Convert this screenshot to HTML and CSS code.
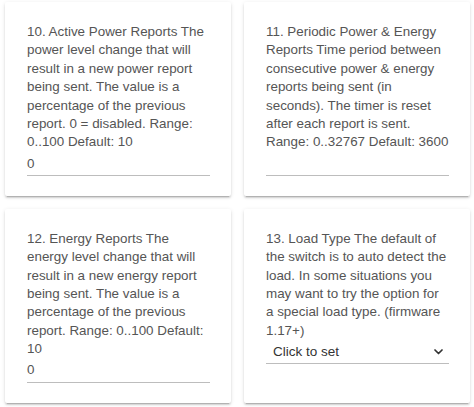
FILE: index.html
```html
<!DOCTYPE html>
<html lang="en">
<head>
<meta charset="utf-8">
<title>Parameters</title>
<link rel="stylesheet" href="styles.css">
</head>
<body>
<div class="grid">
  <div class="card">
    <div class="desc">10. Active Power Reports The power level change that will result in a new power report being sent. The value is a percentage of the previous report. 0 = disabled. Range: 0..100 Default: 10</div>
    <div class="field"><span class="value">0</span></div>
  </div>
  <div class="card">
    <div class="desc">11. Periodic Power &amp; Energy Reports Time period between consecutive power &amp; energy reports being sent (in seconds). The timer is reset after each report is sent. Range: 0..32767 Default: 3600</div>
    <div class="field"><span class="value"></span></div>
  </div>
  <div class="card">
    <div class="desc">12. Energy Reports The energy level change that will result in a new energy report being sent. The value is a percentage of the previous report. Range: 0..100 Default: 10</div>
    <div class="field"><span class="value">0</span></div>
  </div>
  <div class="card">
    <div class="desc">13. Load Type The default of the switch is to auto detect the load. In some situations you may want to try the option for a special load type. (firmware 1.17+)</div>
    <div class="field select"><span class="sel-text">Click to set</span>
      <svg class="chev" width="9" height="6" viewBox="0 0 9 6"><path d="M1 1 L4.5 4.5 L8 1" fill="none" stroke="#333" stroke-width="1.7" stroke-linecap="round" stroke-linejoin="round"/></svg>
    </div>
  </div>
</div>
</body>
</html>
```
FILE: styles.css
```css
html, body {
  margin: 0;
  padding: 0;
  background: #ffffff;
}
body {
  font-family: "Liberation Sans", Arial, sans-serif;
  font-size: 13.4px;
  line-height: 18.4px;
  color: #555555;
}
.grid {
  display: grid;
  grid-template-columns: 226px 226px;
  column-gap: 13px;
  row-gap: 13px;
  padding: 2px 4px 4px 5px;
}
.card {
  background: #ffffff;
  border-radius: 2px;
  box-shadow: 0 2px 2px 0 rgba(0,0,0,0.12), 0 1px 4px 0 rgba(0,0,0,0.10), 0 3px 1px -2px rgba(0,0,0,0.16);
  padding: 21px 21px 20px 22px;
  display: flex;
  flex-direction: column;
}
.desc {
  color: #555555;
}
.field {
  height: 23px;
  border-bottom: 1px solid #bdbdbd;
  display: flex;
  align-items: center;
}
.value {
  color: #555555;
  padding-top: 1px;
}
.select {
  padding: 0 6px 0 7px;
  justify-content: space-between;
}
.sel-text {
  color: #333333;
  font-size: 13.5px;
}
.chev {
  display: block;
}
```
